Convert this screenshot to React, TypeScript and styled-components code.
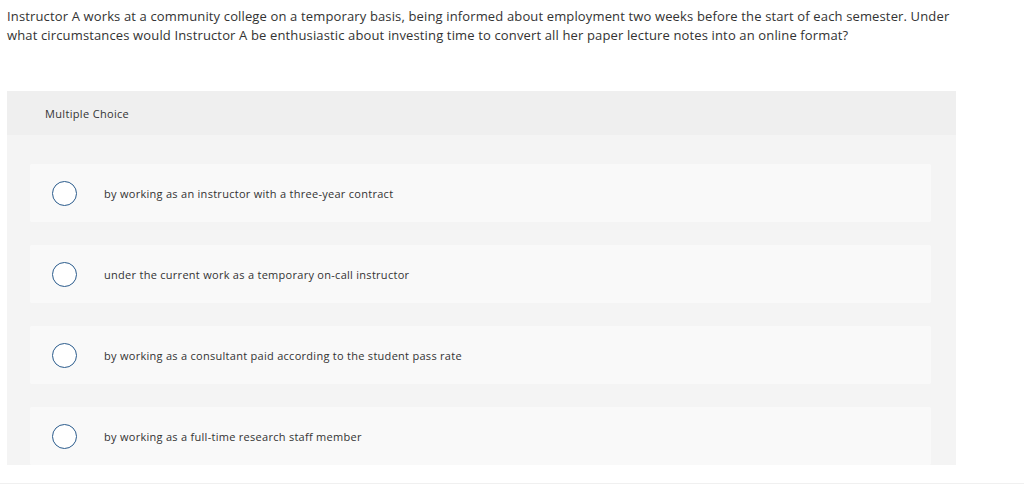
import React from 'react'
import styled, { createGlobalStyle } from 'styled-components'

const GlobalStyle = createGlobalStyle`
  html, body {
    margin: 0;
    padding: 0;
    background: #ffffff;
    font-family: 'Open Sans', 'Liberation Sans', Arial, sans-serif;
    color: #333333;
  }
`

const Page = styled.div`
  width: 1024px;
  height: 484px;
  overflow: hidden;
  border-bottom: 1px solid #f0f0f0;
  box-sizing: border-box;
`

const Content = styled.div`
  width: 949px;
  padding: 7px 0 0 7px;
`

const Question = styled.p`
  margin: 0;
  font-size: 13px;
  line-height: 19px;
  color: #333333;
  letter-spacing: 0.14px;
`

const Panel = styled.section`
  margin-top: 46px;
  background: #f4f4f4;
  height: 374px;
  overflow: hidden;
`

const PanelHeader = styled.div`
  height: 44px;
  background: #efefef;
  display: flex;
  align-items: center;
  padding-left: 38px;
  font-size: 11px;
  letter-spacing: 0.33px;
  color: #333333;
`

const OptionList = styled.ul`
  list-style: none;
  margin: 0;
  padding: 29px 25px 0 23px;
  display: flex;
  flex-direction: column;
  gap: 23px;
`

const Option = styled.li`
  height: 58px;
  background: #f9f9f9;
  border-radius: 2px;
  display: flex;
  align-items: center;
  padding-left: 22px;
  font-size: 11px;
  letter-spacing: 0.28px;
  color: #333333;
  cursor: pointer;
`

const Radio = styled.span`
  width: 23px;
  height: 23px;
  border-radius: 50%;
  border: 1px solid #2a5b8c;
  background: #ffffff;
  flex: none;
  margin-right: 27px;
`

const options = [
  'by working as an instructor with a three-year contract',
  'under the current work as a temporary on-call instructor',
  'by working as a consultant paid according to the student pass rate',
  'by working as a full-time research staff member',
]

export default function App() {
  return (
    <Page>
      <GlobalStyle />
      <Content>
        <Question>
          Instructor A works at a community college on a temporary basis, being informed about employment two weeks
          before the start of each semester. Under what circumstances would Instructor A be enthusiastic about
          investing time to convert all her paper lecture notes into an online format?
        </Question>
        <Panel>
          <PanelHeader>Multiple Choice</PanelHeader>
          <OptionList>
            {options.map((text) => (
              <Option key={text}>
                <Radio />
                {text}
              </Option>
            ))}
          </OptionList>
        </Panel>
      </Content>
    </Page>
  )
}
